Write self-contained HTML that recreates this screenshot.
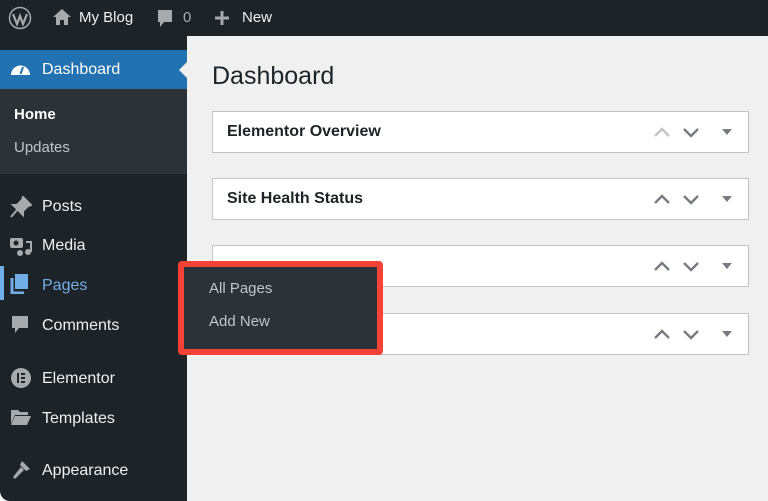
<!DOCTYPE html>
<html><head><meta charset="utf-8"><style>
*{margin:0;padding:0;box-sizing:border-box}
body{width:768px;height:501px;overflow:hidden;background:#fff;font-family:"Liberation Sans",sans-serif;position:relative}
.top{position:absolute;left:0;top:0;width:768px;height:36px;background:#1d2327;color:#f0f0f1;font-size:15px}
.top span{position:absolute;top:9px}
.side{position:absolute;left:0;top:36px;width:187px;height:465px;background:#1d2327;border-bottom-left-radius:10px}
.content{position:absolute;left:187px;top:36px;width:581px;height:465px;background:#f0f0f1}
.dash{position:absolute;left:0;top:14px;width:187px;height:39px;background:#2271b1;color:#fff;font-size:16px}
.sub{position:absolute;left:0;top:53px;width:187px;height:85px;background:#2c3338}
.it{position:absolute;left:42px;color:#f0f0f1;font-size:16px}
.ic{position:absolute;left:10px}
h1{position:absolute;left:25px;top:26px;font-size:25px;font-weight:normal;color:#1d2327}
.w{position:absolute;left:25px;width:537px;height:42px;background:#fff;border:1px solid #c3c4c7}
.w b{position:absolute;left:14px;top:11px;font-size:16px;color:#1d2327}
.w svg{position:absolute;right:16px;top:12px}
.pop{position:absolute;left:178px;top:261px;width:205px;height:94px;background:#2c3338;border:6px solid #f44336;border-radius:4px}
.pop span{position:absolute;left:25px;color:#c3c4c7;font-size:15px}
</style></head><body>
<div class="top">
<svg style="position:absolute;left:8px;top:6px" width="24" height="24" viewBox="0 0 24 24"><circle cx="12" cy="12" r="10.5" fill="none" stroke="#a7aaad" stroke-width="1.5"/><path d="M5 8 L9 18 L12 10 L15 18 L19 8" fill="none" stroke="#a7aaad" stroke-width="2.2"/></svg>
<svg style="position:absolute;left:52px;top:8px" width="20" height="18" viewBox="0 0 20 18"><path d="M10 1 L1 9 H4 V17 H8 V12 H12 V17 H16 V9 H19 Z" fill="#a7aaad"/></svg>
<span style="left:79px">My Blog</span>
<svg style="position:absolute;left:156px;top:9px" width="18" height="20" viewBox="0 0 18 20"><path d="M2 1 H16 V13 H8 L4 18 V13 H2 Z" fill="#a7aaad"/></svg>
<span style="left:183px;color:#a7aaad">0</span>
<svg style="position:absolute;left:214px;top:10px" width="16" height="16"><path d="M8 1V15M1 8H15" stroke="#a7aaad" stroke-width="3"/></svg>
<span style="left:242px">New</span>
</div>
<div class="side">
<div class="dash">
<svg class="ic" style="top:10px" width="21" height="18" viewBox="0 0 21 18"><path d="M1 15 A9.5 9.5 0 1 1 20 15 Z" fill="#fff"/><path d="M10.5 14 L13 7" stroke="#2271b1" stroke-width="2"/></svg>
<span style="position:absolute;left:42px;top:11px">Dashboard</span>
<div style="position:absolute;right:0;top:12px;width:0;height:0;border:8px solid transparent;border-right-color:#f0f0f1"></div>
</div>
<div class="sub">
<span style="position:absolute;left:14px;top:17px;color:#fff;font-weight:bold;font-size:15px">Home</span>
<span style="position:absolute;left:14px;top:50px;color:#c3c4c7;font-size:15px">Updates</span>
</div>
<svg class="ic" style="top:160px" width="22" height="22" viewBox="0 0 22 22"><path d="M13 1 L21 9 L18 10 L13 15 L13 19 L3 9 L7 9 L12 4 Z M7 14 L1 21" fill="#a7aaad" stroke="#a7aaad" stroke-width="2"/></svg>
<span class="it" style="top:162px">Posts</span>
<svg class="ic" style="top:199px" width="22" height="22" viewBox="0 0 22 22"><rect x="0" y="3" width="13" height="10" rx="2" fill="#a7aaad"/><circle cx="6" cy="8" r="2.5" fill="#1d2327"/><path d="M16 7 H21 V17" stroke="#a7aaad" stroke-width="2" fill="none"/><circle cx="18" cy="17" r="3" fill="#a7aaad"/><circle cx="10" cy="18" r="3" fill="#a7aaad"/></svg>
<span class="it" style="top:201px">Media</span>
<div style="position:absolute;left:0;top:230px;width:4px;height:34px;background:#72aee6"></div>
<svg class="ic" style="top:238px" width="20" height="20" viewBox="0 0 20 20"><rect x="5" y="0" width="13" height="15" fill="#72aee6"/><path d="M2 4 V19 H14" stroke="#72aee6" stroke-width="3" fill="none"/></svg>
<span class="it" style="top:241px;color:#72aee6">Pages</span>
<svg class="ic" style="top:279px" width="20" height="20" viewBox="0 0 20 20"><path d="M2 1 H18 V13 H9 L5 18 V13 H2 Z" fill="#a7aaad"/></svg>
<span class="it" style="top:281px">Comments</span>
<svg class="ic" style="top:331px" width="22" height="22" viewBox="0 0 22 22"><circle cx="11" cy="11" r="10" fill="#a7aaad"/><rect x="7" y="6" width="2" height="10" fill="#1d2327"/><path d="M11 7H15M11 11H15M11 15H15" stroke="#1d2327" stroke-width="2"/></svg>
<span class="it" style="top:334px">Elementor</span>
<svg class="ic" style="top:372px" width="22" height="18" viewBox="0 0 22 18"><path d="M1 2 H8 L10 4 H18 V7 H5 L1 16 Z M5 8 H21 L17 17 H1 Z" fill="#a7aaad"/></svg>
<span class="it" style="top:374px">Templates</span>
<svg class="ic" style="top:423px" width="22" height="22" viewBox="0 0 22 22"><path d="M12 2 L20 10 L16 12 L10 6 Z" fill="#a7aaad"/><path d="M11 8 L3 18 L5 20 L14 11" fill="#a7aaad"/></svg>
<span class="it" style="top:426px">Appearance</span>
</div>
<div class="content">
<h1>Dashboard</h1>
<div class="w" style="top:75px"><b>Elementor Overview</b><svg width="78" height="16"><path d="M1 12 L8 5 L15 12" stroke="#c3c4c7" stroke-width="2.4" fill="none"/><path d="M30 5 L37 12 L44 5" stroke="#787c82" stroke-width="2.4" fill="none"/><path d="M68 5 H78 L73 11 Z" fill="#787c82"/></svg></div>
<div class="w" style="top:142px"><b>Site Health Status</b><svg width="78" height="16"><path d="M1 12 L8 5 L15 12" stroke="#787c82" stroke-width="2.4" fill="none"/><path d="M30 5 L37 12 L44 5" stroke="#787c82" stroke-width="2.4" fill="none"/><path d="M68 5 H78 L73 11 Z" fill="#787c82"/></svg></div>
<div class="w" style="top:209px"><svg width="78" height="16"><path d="M1 12 L8 5 L15 12" stroke="#787c82" stroke-width="2.4" fill="none"/><path d="M30 5 L37 12 L44 5" stroke="#787c82" stroke-width="2.4" fill="none"/><path d="M68 5 H78 L73 11 Z" fill="#787c82"/></svg></div>
<div class="w" style="top:277px"><svg width="78" height="16"><path d="M1 12 L8 5 L15 12" stroke="#787c82" stroke-width="2.4" fill="none"/><path d="M30 5 L37 12 L44 5" stroke="#787c82" stroke-width="2.4" fill="none"/><path d="M68 5 H78 L73 11 Z" fill="#787c82"/></svg></div>
</div>
<div class="pop">
<span style="top:13px">All Pages</span>
<span style="top:46px">Add New</span>
</div>
</body></html>
